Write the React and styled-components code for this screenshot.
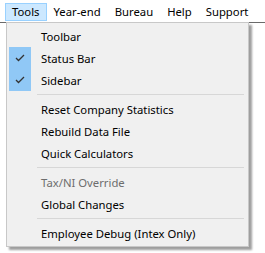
import React from "react";
import styled, { createGlobalStyle } from "styled-components";

const Global = createGlobalStyle`
  html, body { margin: 0; padding: 0; background: #fff; }
  body { font-family: "Noto Sans", "Segoe UI", sans-serif; }
`;

const Screen = styled.div`
  position: relative;
  width: 265px;
  height: 253px;
  overflow: hidden;
  background: #fff;
`;

const MenuBar = styled.div`
  display: flex;
  align-items: center;
  height: 21px;
  padding: 1px 0 0 5px;
  background: #fff;
  border-bottom: 1px solid #6a6a6a;
`;

const BarItem = styled.div`
  box-sizing: border-box;
  height: 18px;
  padding: 0 6px;
  display: flex;
  align-items: center;
  font-size: 11.3px;
  color: #000;
  border: 1px solid ${(p) => (p.$active ? "#99d1ff" : "transparent")};
  background: ${(p) => (p.$active ? "#cce8ff" : "transparent")};
  white-space: nowrap;
`;

const Dropdown = styled.div`
  position: absolute;
  left: 6px;
  top: 22px;
  width: 241px;
  box-sizing: content-box;
  padding: 2px 0;
  background: #f0f0f0;
  border: 1px solid #c8c8c8;
  box-shadow: 3px 3px 2px rgba(0, 0, 0, 0.38);
  display: flex;
  flex-direction: column;
`;

const Item = styled.div`
  display: grid;
  grid-template-columns: 22px 1fr;
  align-items: center;
  height: 22px;
  padding-left: 2px;
  font-size: 11.3px;
  color: ${(p) => (p.$disabled ? "#6d6d6d" : "#000")};
  white-space: nowrap;
`;

const CheckBox = styled.div`
  height: 22px;
  display: flex;
  align-items: center;
  justify-content: center;
  background: ${(p) => (p.$checked ? "#90c8f6" : "transparent")};
`;

const Label = styled.span`
  padding-left: 10px;
`;

const Separator = styled.div`
  height: 1px;
  margin: 3px 4px 3px 30px;
  background: #d7d7d7;
`;

const Check = () => (
  <svg width="10" height="8" viewBox="0 0 10 8">
    <polyline
      points="1,4 3.5,6.5 9,1"
      fill="none"
      stroke="#333"
      strokeWidth="1.3"
    />
  </svg>
);

const MenuItem = ({ label, checked, disabled }) => (
  <Item $disabled={disabled}>
    <CheckBox $checked={checked}>{checked && <Check />}</CheckBox>
    <Label>{label}</Label>
  </Item>
);

export default function App() {
  return (
    <Screen>
      <Global />
      <MenuBar>
        <BarItem $active>Tools</BarItem>
        <BarItem>Year-end</BarItem>
        <BarItem>Bureau</BarItem>
        <BarItem>Help</BarItem>
        <BarItem>Support</BarItem>
      </MenuBar>
      <Dropdown>
        <MenuItem label="Toolbar" />
        <MenuItem label="Status Bar" checked />
        <MenuItem label="Sidebar" checked />
        <Separator />
        <MenuItem label="Reset Company Statistics" />
        <MenuItem label="Rebuild Data File" />
        <MenuItem label="Quick Calculators" />
        <Separator />
        <MenuItem label="Tax/NI Override" disabled />
        <MenuItem label="Global Changes" />
        <Separator />
        <MenuItem label="Employee Debug (Intex Only)" />
      </Dropdown>
    </Screen>
  );
}
